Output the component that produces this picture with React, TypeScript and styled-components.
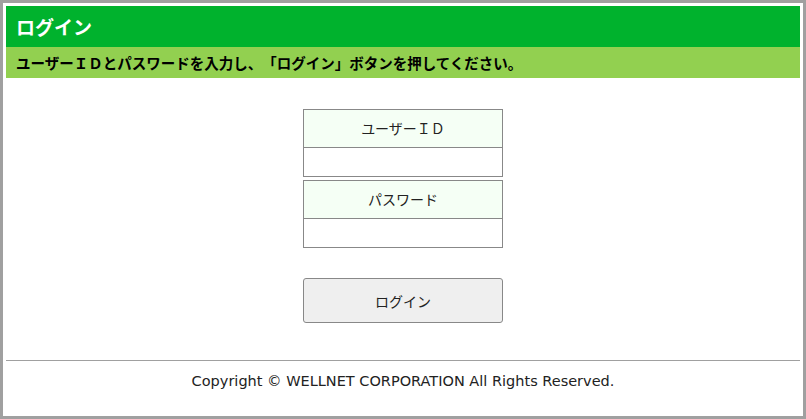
import styled, { createGlobalStyle } from "styled-components";

const GlobalStyle = createGlobalStyle`
  html, body {
    margin: 0;
    padding: 0;
    background: #fff;
  }
  body {
    font-family: "Noto Sans CJK JP", "Noto Sans", sans-serif;
    color: #000;
    text-spacing-trim: space-all;
  }
`;

const Frame = styled.div`
  box-sizing: border-box;
  width: 806px;
  height: 419px;
  border: 3px solid #a0a0a0;
  padding: 3px;
  display: flex;
  flex-direction: column;
`;

const TitleBar = styled.h1`
  margin: 0;
  height: 41px;
  background: #00b22d;
  color: #fff;
  font-size: 19px;
  font-weight: 700;
  line-height: 41px;
  padding-left: 10px;
`;

const Guide = styled.p`
  margin: 0;
  height: 31px;
  background: #92d050;
  font-size: 14.5px;
  font-weight: 700;
  line-height: 31px;
  padding-left: 10px;
`;

const Form = styled.form`
  flex: 1;
  display: flex;
  flex-direction: column;
  align-items: center;
  padding-top: 31px;
`;

const FieldBox = styled.div`
  box-sizing: border-box;
  width: 200px;
  border: 1px solid #888;
  margin-bottom: 3px;
`;

const FieldLabel = styled.label`
  display: block;
  height: 37px;
  line-height: 37px;
  text-align: center;
  background: #f5fff5;
  border-bottom: 1px solid #888;
  font-size: 14px;
  color: #222;
`;

const FieldInput = styled.input`
  display: block;
  box-sizing: border-box;
  width: 100%;
  height: 28px;
  border: none;
  outline: none;
  padding: 0 6px;
  font-size: 14px;
  background: #fff;
`;

const LoginButton = styled.button`
  box-sizing: border-box;
  margin-top: 27px;
  width: 200px;
  height: 45px;
  background: #efefef;
  border: 1px solid #888;
  border-radius: 3px;
  font-family: inherit;
  font-size: 14px;
  color: #222;
  cursor: pointer;
`;

const Footer = styled.footer`
  border-top: 1px solid #a0a0a0;
  height: 52px;
  text-align: center;
  font-family: "DejaVu Sans", "Noto Sans CJK JP", sans-serif;
  font-size: 14.5px;
  line-height: 41px;
  color: #222;
`;

export default function App() {
  return (
    <>
      <GlobalStyle />
      <Frame>
        <TitleBar>ログイン</TitleBar>
        <Guide>ユーザーＩＤとパスワードを入力し、「ログイン」ボタンを押してください。</Guide>
        <Form onSubmit={(e) => e.preventDefault()}>
          <FieldBox>
            <FieldLabel htmlFor="userId">ユーザーＩＤ</FieldLabel>
            <FieldInput type="text" id="userId" name="userId" />
          </FieldBox>
          <FieldBox>
            <FieldLabel htmlFor="userPw">パスワード</FieldLabel>
            <FieldInput type="password" id="userPw" name="userPw" />
          </FieldBox>
          <LoginButton type="submit">ログイン</LoginButton>
        </Form>
        <Footer>Copyright © WELLNET CORPORATION All Rights Reserved.</Footer>
      </Frame>
    </>
  );
}
